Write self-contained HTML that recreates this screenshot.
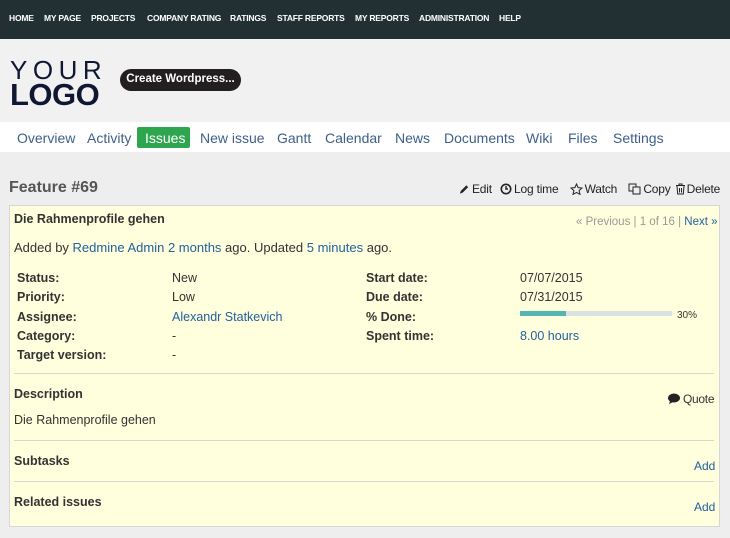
<!DOCTYPE html>
<html><head><meta charset="utf-8"><style>
*{margin:0;padding:0;box-sizing:border-box}
body{width:730px;height:538px;overflow:hidden;background:#eeeeee;font-family:"Liberation Sans",Arial,sans-serif;color:#333;position:relative}
.a{position:absolute;white-space:nowrap;line-height:1}
#top{position:absolute;left:0;top:0;width:730px;height:39px;background:#233033}
#top span{position:absolute;top:13px;color:#fff;font-size:8.5px;font-weight:bold;letter-spacing:-0.2px}
#hdr{position:absolute;left:0;top:39px;width:730px;height:83px;background:#f1f1f1}
#nav{position:absolute;left:0;top:122px;width:730px;height:30px;background:#fff}
#nav span{position:absolute;top:8px;font-size:14px;color:#3d5f88}
.l{color:#22609e}
.lab{font-weight:bold;font-size:12.5px;color:#333}
.val{font-size:12.5px}
.hr{position:absolute;left:14px;width:700px;height:1px;background:#d8d8cc}
.ic{margin-right:2px}
</style></head><body>
<div id="top">
<span style="left:9px">HOME</span><span style="left:44px">MY PAGE</span><span style="left:91px">PROJECTS</span><span style="left:147px">COMPANY RATING</span><span style="left:230px">RATINGS</span><span style="left:277px">STAFF REPORTS</span><span style="left:355px">MY REPORTS</span><span style="left:419px">ADMINISTRATION</span><span style="left:499px">HELP</span>
</div>
<div id="hdr">
<div class="a" style="left:10px;top:18px;font-size:26px;letter-spacing:5.5px;color:#0f1733">YOUR</div>
<div class="a" style="left:10px;top:40px;font-size:31px;font-weight:bold;color:#0f1733;letter-spacing:-0.5px">LOGO</div>
<div class="a" style="left:120px;top:30px;width:121px;height:22px;border-radius:11px;background:#231f20;color:#fff;font-size:11.5px;font-weight:bold;padding-top:5px;text-align:center">Create Wordpress...</div>
</div>
<div id="nav">
<span style="left:17px">Overview</span><span style="left:87px">Activity</span>
<div class="a" style="left:137px;top:5px;width:53px;height:21px;background:#2ea64f;border-radius:2px"></div>
<span style="left:145px;color:#fff">Issues</span>
<span style="left:200px">New issue</span><span style="left:277px">Gantt</span><span style="left:325px">Calendar</span><span style="left:395px">News</span><span style="left:444px">Documents</span><span style="left:526px">Wiki</span><span style="left:568px">Files</span><span style="left:613px">Settings</span>
</div>
<div class="a" style="left:9px;top:180px;font-size:16px;font-weight:bold;color:#555">Feature #69</div>
<div class="a" style="left:459px;top:183px;font-size:12px;color:#222;letter-spacing:-0.2px">
<svg class="ic" width="11" height="12" viewBox="0 0 12 12" style="vertical-align:-2px"><path d="M1 11l1-3 6-6 2 2-6 6z" fill="#222"/></svg>Edit
<span style="margin-left:5px"><svg class="ic" width="12" height="12" viewBox="0 0 12 12" style="vertical-align:-2px"><circle cx="6" cy="6" r="4.7" fill="none" stroke="#222" stroke-width="1.6"/><path d="M6 3v3h2" fill="none" stroke="#222" stroke-width="1.4"/></svg>Log time</span>
<span style="margin-left:8px"><svg class="ic" width="13" height="12" viewBox="0 0 13 12" style="vertical-align:-2px"><path d="M6.5 1l1.6 3.6 3.9.4-2.9 2.6.9 3.8-3.5-2-3.5 2 .9-3.8L1 5l3.9-.4z" fill="none" stroke="#222" stroke-width="1"/></svg>Watch</span>
<span style="margin-left:8px"><svg width="14" height="12" viewBox="0 0 14 12" style="vertical-align:-2px;margin-right:1px"><rect x="1" y="1" width="7" height="7" fill="none" stroke="#222"/><rect x="5" y="4" width="7" height="7" fill="#eee" stroke="#222"/></svg>Copy</span>
<span style="margin-left:1px"><svg width="11" height="12" viewBox="0 0 11 12" style="vertical-align:-2px;margin-right:1px"><path d="M1 2.5h9M4 2.5V1h3v1.5M2 3l.7 8h5.6L9 3M4.5 5v4.5M6.5 5v4.5" fill="none" stroke="#222"/></svg>Delete</span>
</div>
<div class="a" style="left:9px;top:205px;width:711px;height:322px;background:#ffffdd;border:1px solid #d7d7d7"></div>
<div class="a" style="left:14px;top:213px;font-size:12.5px;font-weight:bold">Die Rahmenprofile gehen</div>
<div class="a" style="left:576px;top:217px;font-size:11.5px;color:#999">« Previous | 1 of 16 | <span class="l">Next »</span></div>
<div class="a" style="left:14px;top:241px;font-size:13px">Added by <span class="l">Redmine Admin</span> <span class="l">2 months</span> ago. Updated <span class="l">5 minutes</span> ago.</div>
<div class="a lab" style="left:17px;top:272px">Status:</div><div class="a val" style="left:172px;top:272px">New</div>
<div class="a lab" style="left:17px;top:291px">Priority:</div><div class="a val" style="left:172px;top:291px">Low</div>
<div class="a lab" style="left:17px;top:311px">Assignee:</div><div class="a val l" style="left:172px;top:311px">Alexandr Statkevich</div>
<div class="a lab" style="left:17px;top:330px">Category:</div><div class="a val" style="left:172px;top:330px">-</div>
<div class="a lab" style="left:17px;top:349px">Target version:</div><div class="a val" style="left:172px;top:349px">-</div>
<div class="a lab" style="left:366px;top:272px">Start date:</div><div class="a val" style="left:520px;top:272px">07/07/2015</div>
<div class="a lab" style="left:366px;top:291px">Due date:</div><div class="a val" style="left:520px;top:291px">07/31/2015</div>
<div class="a lab" style="left:366px;top:311px">% Done:</div>
<div class="a" style="left:520px;top:311px;width:152px;height:5px;background:#d9e3e4"><div style="width:46px;height:5px;background:#55b5b3"></div></div>
<div class="a" style="left:677px;top:311px;font-size:10px">30%</div>
<div class="a lab" style="left:366px;top:330px">Spent time:</div><div class="a val l" style="left:520px;top:330px">8.00 hours</div>
<div class="hr" style="top:373px"></div>
<div class="a lab" style="left:14px;top:388px">Description</div>
<div class="a" style="left:667px;top:393px;font-size:12px;letter-spacing:-0.3px"><svg width="14" height="12" viewBox="0 0 14 12" style="vertical-align:-2px;margin-right:2px"><ellipse cx="7" cy="5" rx="6" ry="4.5" fill="#222"/><path d="M3 8l-1 3 4-2z" fill="#222"/></svg>Quote</div>
<div class="a" style="left:14px;top:414px;font-size:12.5px">Die Rahmenprofile gehen</div>
<div class="hr" style="top:440px"></div>
<div class="a lab" style="left:14px;top:455px">Subtasks</div>
<div class="a l" style="left:694px;top:460px;font-size:12px">Add</div>
<div class="hr" style="top:481px"></div>
<div class="a lab" style="left:14px;top:496px">Related issues</div>
<div class="a l" style="left:694px;top:501px;font-size:12px">Add</div>
</body></html>
